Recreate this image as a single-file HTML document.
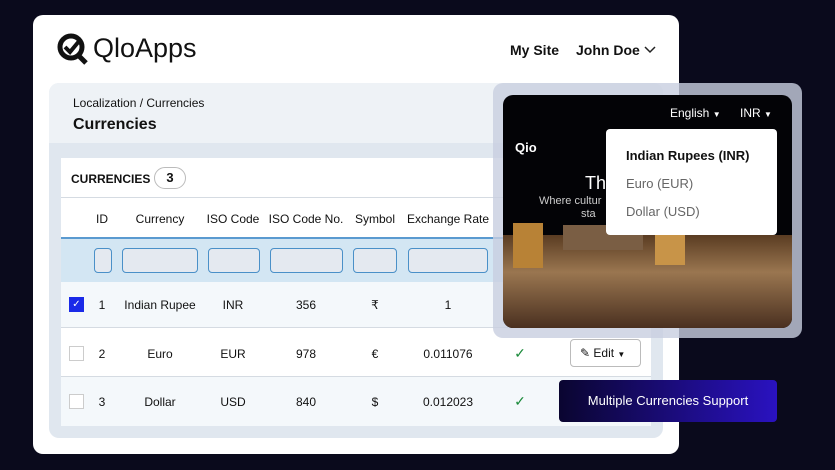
<!DOCTYPE html>
<html><head><style>
*{margin:0;padding:0;box-sizing:border-box}
body{width:835px;height:470px;background:#0a0a1c;font-family:"Liberation Sans",sans-serif;position:relative;overflow:hidden;color:#111}
.abs{position:absolute}
.card{left:33px;top:15px;width:646px;height:439px;background:#fff;border-radius:10px}
.panel{left:49px;top:83px;width:614px;height:355px;background:#e0e7ef;border-radius:10px;overflow:hidden}
.phead{left:0;top:0;width:614px;height:60px;background:#eef2f6}
.tbl{left:61px;top:158px;width:590px;height:268px;background:#fff}
.t{position:absolute;font-size:12px;transform:translateX(-50%);white-space:nowrap}
.inp{position:absolute;top:248px;height:25px;border:1px solid #4a90c8;border-radius:4px;background:#e4e9f0}
.cb{position:absolute;left:69px;width:15px;height:15px;border:1px solid #ccc;background:#fff}
.chk{color:#1a8a3a;font-size:14px}
.dd{position:absolute;left:20px;font-size:13px;color:#666}
</style></head><body>
<div class="abs card"></div>
<svg class="abs" style="left:56px;top:31px" width="36" height="36" viewBox="0 0 36 36"><circle cx="15" cy="16" r="11" fill="none" stroke="#111" stroke-width="5"/><path d="M9 16l5 5 10-12" fill="none" stroke="#111" stroke-width="4"/><path d="M22 24l8 8" stroke="#111" stroke-width="5"/></svg>
<div class="abs" style="left:93px;top:33px;font-size:27px;color:#111">QloApps</div>
<div class="abs" style="left:510px;top:42px;font-size:14px;font-weight:bold">My Site</div>
<div class="abs" style="left:576px;top:42px;font-size:14px;font-weight:bold">John Doe</div>
<svg class="abs" style="left:644px;top:46px" width="12" height="8"><path d="M1 1l5 5 5-5" fill="none" stroke="#222" stroke-width="1.5"/></svg>
<div class="abs panel"><div class="abs phead"></div></div>
<div class="abs" style="left:73px;top:96px;font-size:12px">Localization / Currencies</div>
<div class="abs" style="left:73px;top:116px;font-size:16px;font-weight:bold">Currencies</div>
<div class="abs tbl"></div>
<div class="abs" style="left:71px;top:172px;font-size:12px;font-weight:bold">CURRENCIES</div>
<div class="abs" style="left:154px;top:167px;width:32px;height:22px;border:1px solid #bbb;border-radius:11px;text-align:center;font-size:13px;font-weight:bold;line-height:20px">3</div>
<div class="abs" style="left:61px;top:197px;width:590px;height:1px;background:#d5dbe2"></div>
<div class="abs" style="left:61px;top:237px;width:590px;height:45px;background:#d3e6f3;border-top:2px solid #5a9ad0"></div>
<div class="abs" style="left:61px;top:282px;width:590px;height:46px;background:#f4f8fb;border-bottom:1px solid #d5dbe2"></div>
<div class="abs" style="left:61px;top:328px;width:590px;height:49px;background:#fff;border-bottom:1px solid #d5dbe2"></div>
<div class="abs" style="left:61px;top:377px;width:590px;height:49px;background:#f4f8fb"></div>
<div style="position:absolute;top:212px;left:0">
<span class="t" style="left:102px">ID</span><span class="t" style="left:160px">Currency</span><span class="t" style="left:233px">ISO Code</span><span class="t" style="left:306px">ISO Code No.</span><span class="t" style="left:375px">Symbol</span><span class="t" style="left:448px">Exchange Rate</span></div>
<div class="inp" style="left:94px;width:18px"></div><div class="inp" style="left:122px;width:76px"></div><div class="inp" style="left:208px;width:52px"></div><div class="inp" style="left:270px;width:73px"></div><div class="inp" style="left:353px;width:44px"></div><div class="inp" style="left:408px;width:80px"></div>
<div class="cb" style="top:297px;background:#1a2ae8;border-color:#1a2ae8;color:#fff;font-size:10px;text-align:center;line-height:13px">✓</div>
<div class="cb" style="top:346px"></div><div class="cb" style="top:394px"></div>
<div style="position:absolute;top:298px;left:0"><span class="t" style="left:102px">1</span><span class="t" style="left:160px">Indian Rupee</span><span class="t" style="left:233px">INR</span><span class="t" style="left:306px">356</span><span class="t" style="left:375px">₹</span><span class="t" style="left:448px">1</span></div>
<div style="position:absolute;top:347px;left:0"><span class="t" style="left:102px">2</span><span class="t" style="left:160px">Euro</span><span class="t" style="left:233px">EUR</span><span class="t" style="left:306px">978</span><span class="t" style="left:375px">€</span><span class="t" style="left:448px">0.011076</span><span class="t chk" style="left:520px;top:-2px">✓</span></div>
<div style="position:absolute;top:395px;left:0"><span class="t" style="left:102px">3</span><span class="t" style="left:160px">Dollar</span><span class="t" style="left:233px">USD</span><span class="t" style="left:306px">840</span><span class="t" style="left:375px">$</span><span class="t" style="left:448px">0.012023</span><span class="t chk" style="left:520px;top:-2px">✓</span></div>
<div class="abs" style="left:570px;top:339px;width:71px;height:28px;border:1px solid #bbb;border-radius:4px;background:#fff;font-size:12px;line-height:26px;padding-left:9px">✎ Edit <span style="font-size:8px">▼</span></div>
<div class="abs" style="left:493px;top:83px;width:309px;height:255px;background:rgba(200,206,224,0.8);border-radius:10px"></div>
<div class="abs" style="left:503px;top:95px;width:289px;height:233px;background:#030306;border-radius:10px;overflow:hidden">
<div class="abs" style="left:0;top:140px;width:289px;height:93px;background:linear-gradient(180deg,#5a3c22,#9a7650 40%,#4a3020)"></div>
<div class="abs" style="left:10px;top:128px;width:30px;height:45px;background:#b88236"></div>
<div class="abs" style="left:152px;top:138px;width:30px;height:32px;background:#c89448"></div>
<div class="abs" style="left:60px;top:130px;width:80px;height:25px;background:#7a5e44"></div>
<div class="abs" style="left:12px;top:45px;color:#fff;font-size:13px;font-weight:bold">Qio</div>
<div class="abs" style="left:82px;top:78px;color:#fff;font-size:18px">The</div>
<div class="abs" style="left:36px;top:100px;color:#ccc;font-size:11px">Where cultur</div>
<div class="abs" style="left:78px;top:113px;color:#ccc;font-size:11px">sta</div>
<div class="abs" style="left:167px;top:11px;color:#fff;font-size:12px">English <span style="font-size:8px">▼</span></div>
<div class="abs" style="left:237px;top:11px;color:#fff;font-size:12px">INR <span style="font-size:8px">▼</span></div>
<div class="abs" style="left:103px;top:34px;width:171px;height:106px;background:#fff;border-radius:4px">
<div class="dd" style="top:19px;color:#111;font-weight:bold">Indian Rupees (INR)</div>
<div class="dd" style="top:47px">Euro (EUR)</div>
<div class="dd" style="top:75px">Dollar (USD)</div>
</div>
</div>
<div class="abs" style="left:559px;top:380px;width:218px;height:42px;border-radius:4px;background:linear-gradient(90deg,#0a0530,#2a12c0);color:#fff;font-size:13px;line-height:42px;text-align:center">Multiple Currencies Support</div>
</body></html>
